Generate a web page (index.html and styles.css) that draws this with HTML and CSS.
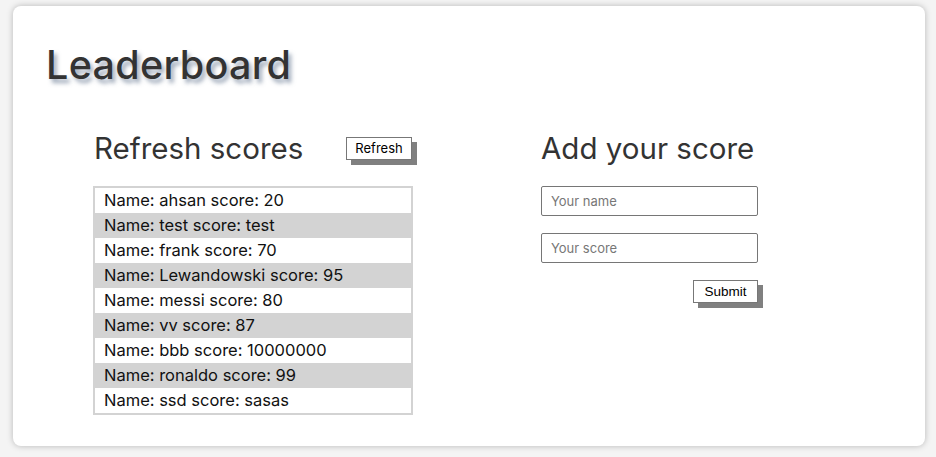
FILE: index.html
```html
<!DOCTYPE html>
<html lang="en">
<head>
    <meta charset="UTF-8">
    <title>Leaderboard</title>
    <link rel="stylesheet" href="styles.css">
</head>
<body>
    <div class="card">
        <h1 class="title">Leaderboard</h1>
        <div class="columns">
            <section class="scores">
                <div class="scores-head">
                    <h2>Refresh scores</h2>
                    <button class="btn refresh" type="button">Refresh</button>
                </div>
                <ul class="score-list">
                    <li>Name: ahsan score: 20</li>
                    <li>Name: test score: test</li>
                    <li>Name: frank score: 70</li>
                    <li>Name: Lewandowski score: 95</li>
                    <li>Name: messi score: 80</li>
                    <li>Name: vv score: 87</li>
                    <li>Name: bbb score: 10000000</li>
                    <li>Name: ronaldo score: 99</li>
                    <li>Name: ssd score: sasas</li>
                </ul>
            </section>
            <section class="add">
                <h2>Add your score</h2>
                <form class="add-form">
                    <input type="text" placeholder="Your name">
                    <input type="text" placeholder="Your score">
                    <button class="btn submit" type="button">Submit</button>
                </form>
            </section>
        </div>
    </div>
</body>
</html>
```

FILE: styles.css
```css
* {
    margin: 0;
    padding: 0;
    box-sizing: border-box;
}

body {
    font-family: Inter, 'Noto Sans', sans-serif;
    background: #f4f4f4;
    color: #333;
    padding: 6px 11px 11px 13px;
}

.card {
    background: white;
    border-radius: 8px;
    box-shadow: 0 0 6px rgba(0, 0, 0, 0.25);
    height: 440px;
    padding: 31px 0 0 33px;
}

.title {
    font-size: 39.5px;
    font-weight: 500;
    color: #333;
    letter-spacing: 0.3px;
    text-shadow: 3px 4px 4px rgba(80, 100, 130, 0.55);
    line-height: 56px;
}

.columns {
    display: flex;
    gap: 128px;
    padding-left: 47px;
    margin-top: 35px;
}

h2 {
    font-size: 29.5px;
    font-weight: 400;
    color: #333;
    line-height: 40px;
}

.scores {
    width: 320px;
}

.scores-head {
    display: flex;
    align-items: center;
    padding-left: 1px;
    height: 40px;
}

.scores-head h2 {
    width: 252px;
}

.btn {
    background: white;
    border: 1px solid #777;
    box-shadow: 5px 5px 0 #808080;
    color: #000;
    cursor: pointer;
}

.refresh {
    font-family: Inter, sans-serif;
    font-size: 13px;
    height: 23px;
    width: 66px;
}

.score-list {
    list-style: none;
    border: 2px solid #d3d3d3;
    margin-top: 18px;
}

.score-list li {
    font-size: 16.5px;
    color: #111;
    height: 25px;
    line-height: 25px;
    padding-left: 9px;
}

.score-list li:nth-child(even) {
    background: #d3d3d3;
}

.add {
    width: 217px;
}

.add-form {
    display: flex;
    flex-direction: column;
    gap: 17px;
    margin-top: 18px;
}

.add-form input {
    height: 30px;
    border: 1px solid #767676;
    border-radius: 2px;
    padding: 0 9px;
    font-family: Inter, sans-serif;
    font-size: 13px;
}

.add-form input::placeholder {
    color: #777;
}

.submit {
    align-self: flex-end;
    font-family: 'Liberation Sans', Arial, sans-serif;
    font-size: 13.5px;
    height: 23px;
    width: 65px;
}
```
